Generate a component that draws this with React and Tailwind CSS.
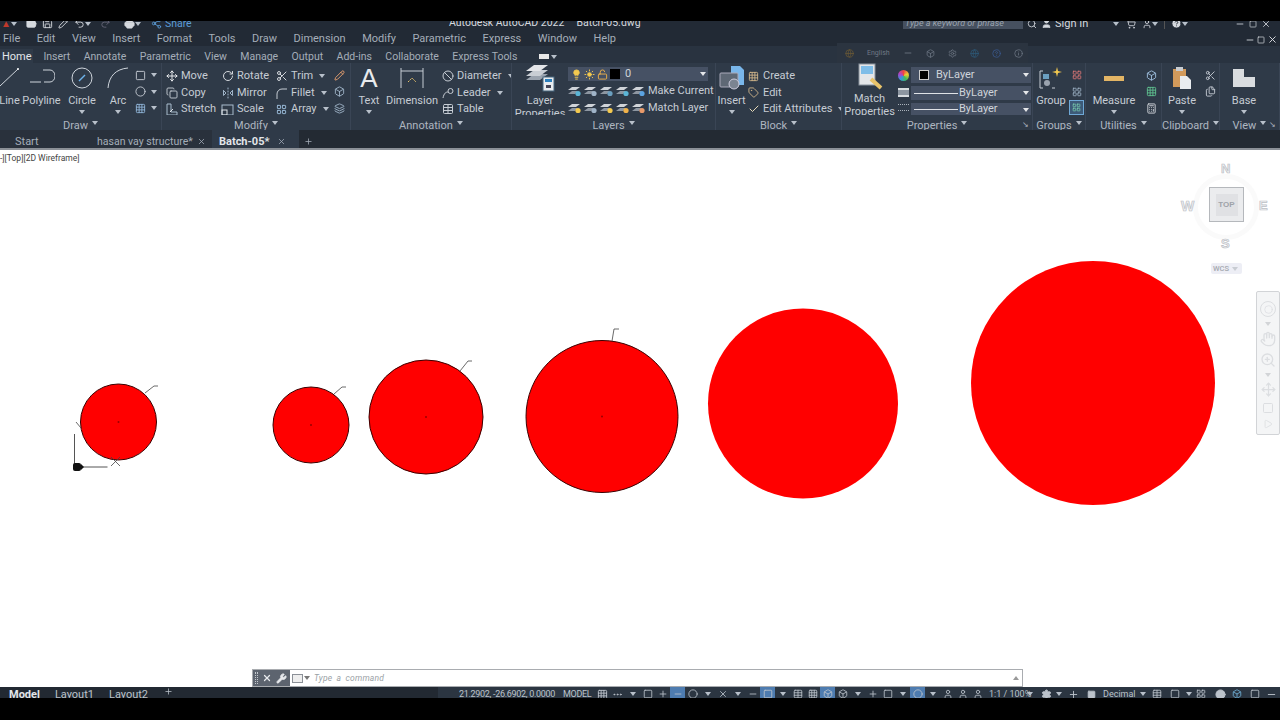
import React from 'react';
import {
  Move, Copy, RotateCw, FlipHorizontal2, Scissors, LayoutGrid, Ban, Table, Lightbulb, Sun, LockOpen,
  Search, User, ShoppingCart, CircleHelp, X, Minus, Wrench, Settings, Plus, Calculator, Files, Hand,
  ZoomIn, Play, Square, Circle, Pencil, Box, Info, Globe, Share2, Save, FolderOpen, Printer, Undo2, Redo2,
  Grid3x3, Ellipsis, Check, Layers, Tag,
} from 'lucide-react';

function Caret({ className = 'text-[#b8c0ca]' }) {
  return (
    <svg width="6" height="4" viewBox="0 0 6 4" className={`shrink-0 ${className}`}>
      <path d="M0 0h6L3 4z" fill="currentColor" />
    </svg>
  );
}

function Panel({ width, title, corner, children }) {
  return (
    <div className={`flex h-full shrink-0 flex-col border-r border-[#3a4555] ${width}`}>
      <div className="flex h-[52px] overflow-hidden">{children}</div>
      <div className="relative mt-[4px] flex h-[11px] justify-center gap-[4px] overflow-hidden text-[11px] leading-[14px] text-[#aeb6c0]">
        <span>{title}</span>
        <span className="mt-[2px]"><Caret /></span>
        {corner && <span className="absolute right-[3px] top-[2px] text-[8px] leading-[8px]">↘</span>}
      </div>
    </div>
  );
}

function BigTool({ icon, label, label2, width, caret }) {
  return (
    <div className={`flex shrink-0 flex-col items-center text-[11px] leading-[13px] text-[#c6ccd4] ${width}`}>
      <div className="flex h-[30px] items-center justify-center">{icon}</div>
      <span className="mt-[1px] whitespace-nowrap">{label}</span>
      {label2 && <span className="whitespace-nowrap">{label2}</span>}
      {caret && <span className="mt-[3px]"><Caret /></span>}
    </div>
  );
}

function Tool({ icon, label, caret }) {
  return (
    <div className="flex h-[16.5px] shrink-0 items-center gap-[3px] whitespace-nowrap text-[11px] text-[#c6ccd4]">
      <span className="flex h-[13px] w-[13px] shrink-0 items-center justify-center">{icon}</span>
      <span>{label}</span>
      {caret && <span className="ml-[3px]"><Caret /></span>}
    </div>
  );
}

function Col({ children, width, className = '' }) {
  return <div className={`flex shrink-0 flex-col pt-[4px] ${width} ${className}`}>{children}</div>;
}

function Slot({ children }) {
  return <span className="flex h-[16.5px] shrink-0 items-center">{children}</span>;
}

function LayerIcon() {
  return (
    <svg width="32" height="30" viewBox="0 0 32 30">
      <path d="M2 17l8-6h14l-8 6z" fill="#9aa3ae" />
      <path d="M2 13l8-6h14l-8 6z" fill="#c9ced4" />
      <path d="M2 8l8-6h14l-8 6z" fill="#e4e6e9" />
      <rect x="19" y="14" width="11" height="14" fill="#e9ecef" stroke="#47667f" />
      <rect x="21" y="16" width="7" height="3" fill="#2c7fbc" />
      <rect x="22" y="22" width="5" height="3" fill="#445" />
    </svg>
  );
}

function LayerMini({ color = '#d8dce0' }) {
  return (
    <svg width="13" height="12" viewBox="0 0 13 12" className="shrink-0">
      <path d="M0 5l4-3h8L8 5z" fill="#cfd3d8" />
      <path d="M0 9l4-3h6L7 9z" fill="#8d96a1" />
      <circle cx="10" cy="8.5" r="2.6" fill={color} />
    </svg>
  );
}

function Stretch() {
  return (
    <svg width="13" height="13" viewBox="0 0 13 13">
      <path d="M2 1h4v8h6v3H2z" fill="none" stroke="#a9bccd" />
      <path d="M5 9l3-3" stroke="#dfe3e7" />
    </svg>
  );
}

function Scale() {
  return (
    <svg width="13" height="13" viewBox="0 0 13 13">
      <rect x="1" y="2" width="11" height="10" fill="none" stroke="#a9bccd" />
      <rect x="1" y="7" width="5" height="5" fill="none" stroke="#dfe3e7" />
    </svg>
  );
}

function Combo({ height, children, className = '' }) {
  return (
    <div className={`flex items-center justify-between bg-[#465164] pl-[3px] pr-[2px] text-[11px] text-[#cfd4da] ${height} ${className}`}>
      <div className="flex items-center">{children}</div>
      <Caret className="text-[#e5e7ea]" />
    </div>
  );
}

function LineWeight() {
  return (
    <>
      <span className="h-px w-[44px] bg-[#dfe2e6]" />
      <span className="ml-[1px]">ByLayer</span>
    </>
  );
}

function StatusIcon({ children, active, className = 'w-[15px]' }) {
  return (
    <span className={`flex h-[14px] shrink-0 items-center justify-center ${className} ${active ? 'bg-[#4e7cb0]' : ''}`}>{children}</span>
  );
}

function Canvas() {
  const circles = [
    { cx: 118.5, cy: 272, r: 38, stroke: true },
    { cx: 311, cy: 275, r: 38, stroke: true },
    { cx: 426, cy: 267, r: 57, stroke: true },
    { cx: 602, cy: 266.5, r: 76, stroke: true },
    { cx: 803, cy: 253.5, r: 95 },
    { cx: 1093, cy: 233, r: 122 },
  ];
  return (
    <svg width="1280" height="537" viewBox="0 0 1280 537" className="block">
      {circles.map((c) => (
        <g key={c.cx}>
          <circle cx={c.cx} cy={c.cy} r={c.r} fill="#ff0000" stroke={c.stroke ? '#3a0000' : 'none'} strokeWidth="1" />
          {c.stroke && <circle cx={c.cx} cy={c.cy} r="1" fill="#9a0000" />}
        </g>
      ))}
      <g fill="none" stroke="#444" strokeWidth="0.8">
        <path d="M145 243l9-7h4" />
        <path d="M334 244l8-7h4" />
        <path d="M460 221l8-10h4" />
        <path d="M612 191l2-12h5" />
        <path d="M76 272l5 6" />
        <path d="M111 307l9 9M120 307l-9 9" />
      </g>
      <path d="M74.5 284v33h33" fill="none" stroke="#555" strokeWidth="1" />
      <rect x="73" y="313" width="8" height="8" fill="#111" rx="2" />
      <path d="M81 314l3 3-3 3z" fill="#111" />
    </svg>
  );
}

export default function App() {
  return (
    <div className="flex h-[720px] w-[1280px] flex-col overflow-hidden bg-black font-[family-name:Roboto,sans-serif]">
      <div className="h-[21px] shrink-0 bg-black" />

      {/* title bar, top is cut by the video frame */}
      <div className="flex h-[10px] shrink-0 items-start overflow-hidden bg-[#222a35] text-[10.5px] leading-[10px] text-[#d5d9de]">
        <div className="mt-[-3px] flex w-[449px] shrink-0 items-center pl-[1px]">
          <span className="text-[10px] text-[#c0392b]">▲</span>
          <Caret />
          <FolderOpen size={11} className="ml-[9px]" fill="currentColor" />
          <Save size={11} className="ml-[5px]" />
          <Pencil size={11} className="ml-[5px]" />
          <Undo2 size={11} className="ml-[5px]" />
          <Caret />
          <Redo2 size={11} className="ml-[9px] text-[#667]" />
          <Printer size={11} className="ml-[13px]" fill="currentColor" />
          <Caret />
          <Share2 size={11} className="ml-[10px] text-[#5b9bd5]" />
          <span className="ml-[3px] text-[#5b9bd5]">Share</span>
        </div>
        <div className="mt-[-3px] flex w-[454px] shrink-0 gap-[12px] whitespace-nowrap">
          <span>Autodesk AutoCAD 2022</span>
          <span>Batch-05.dwg</span>
        </div>
        <div className="h-[8px] w-[120px] shrink-0 bg-[#46505f] pl-[2px] text-[9px] italic leading-[5px] text-[#9aa3ae]">Type a keyword or phrase</div>
        <div className="ml-[4px] mt-[-3px] flex items-center whitespace-nowrap text-[11px]">
          <Search size={10} />
          <User size={11} fill="currentColor" className="ml-[4px]" />
          <span className="ml-[3px]">Sign In</span>
          <span className="ml-[25px]"><Caret /></span>
          <ShoppingCart size={10} className="ml-[7px]" />
          <User size={10} className="ml-[6px]" />
          <Caret />
          <span className="ml-[6px] h-[10px] w-px bg-[#555]" />
          <CircleHelp size={11} className="ml-[6px]" fill="#d5d9de" stroke="#222a35" />
          <Caret />
          <Minus size={10} className="ml-[47px]" />
          <Square size={8} className="ml-[4px]" />
          <X size={10} className="ml-[4px]" />
        </div>
      </div>

      {/* menu bar */}
      <div className="flex h-[15px] shrink-0 items-center gap-[16.5px] bg-[#222a35] pl-[3px] pt-[2px] text-[11px] text-[#a5aeb9]">
        {['File', 'Edit', 'View', 'Insert', 'Format', 'Tools', 'Draw', 'Dimension', 'Modify', 'Parametric', 'Express', 'Window', 'Help'].map((m) => (
          <span key={m}>{m}</span>
        ))}
        <div className="ml-auto mr-[2px] flex items-center gap-[2px] text-[#e0e3e7]">
          <Minus size={10} />
          <Square size={8} />
          <X size={11} />
        </div>
      </div>

      {/* ribbon tabs */}
      <div className="relative flex h-[17px] shrink-0 items-end gap-[13.4px] bg-[#293340] text-[10.5px] leading-[12px] text-[#a5aeb9]">
        <span className="mr-[-3px] flex h-[14px] w-[33px] items-center bg-[#2f3a48] pl-[2px] pt-[2px] text-[11px] text-[#e3e6ea]">Home</span>
        {['Insert', 'Annotate', 'Parametric', 'View', 'Manage', 'Output', 'Add-ins', 'Collaborate', 'Express Tools'].map((t) => (
          <span key={t}>{t}</span>
        ))}
        <span className="mb-[4px] ml-[8px] flex items-center gap-[2px]"><span className="h-[5px] w-[10px] bg-[#e8e8e8]" /><Caret /></span>
        {/* floating language bar */}
        <div className="absolute left-[837px] top-[-3px] flex h-[20px] w-[191px] items-center gap-[13px] bg-[#2b3440] pl-[8px] text-[7px] text-[#6f7885]">
          <Globe size={9} className="text-[#6b5a36]" />
          <span>English</span>
          <Minus size={10} />
          <Box size={9} />
          <Settings size={9} />
          <Globe size={9} className="text-[#2d5a78]" />
          <CircleHelp size={9} className="text-[#3b5b92]" />
          <Info size={9} />
        </div>
      </div>

      {/* ribbon */}
      <div className="flex h-[67px] shrink-0 bg-[#2f3a48]">
        <Panel width="w-[162px]" title="Draw">
          <BigTool
            width="w-[19px] mr-[4px]"
            label="Line"
            icon={<svg width="19" height="24" viewBox="0 0 19 24"><path d="M0 20L18 3" stroke="#cfd5dc" /><circle cx="18" cy="3" r="1" fill="#fff" /></svg>}
          />
          <BigTool
            width="w-[37px]"
            label="Polyline"
            icon={<svg width="26" height="22" viewBox="0 0 26 22"><path d="M1 15h11M14 3h7a5 6 0 0 1 0 12h-6" fill="none" stroke="#cfd5dc" /></svg>}
          />
          <BigTool
            width="w-[44px]"
            label="Circle"
            caret
            icon={<svg width="24" height="24" viewBox="0 0 24 24"><circle cx="12" cy="12" r="10" fill="none" stroke="#cfd5dc" /><path d="M9 15l6-6" stroke="#6db2ea" strokeWidth="1.5" /></svg>}
          />
          <BigTool
            width="w-[28px]"
            label="Arc"
            caret
            icon={<svg width="22" height="24" viewBox="0 0 22 24"><path d="M1 22C2 10 9 3 21 2" fill="none" stroke="#cfd5dc" /></svg>}
          />
          <Col width="w-[27px]" className="pl-[3px]">
            <Slot><Square size={11} className="mr-[5px] text-[#c6ccd4]" /><Caret /></Slot>
            <Slot><Circle size={11} className="mr-[5px] text-[#c6ccd4]" /><Caret /></Slot>
            <Slot><Grid3x3 size={11} className="mr-[5px] text-[#8fb4d8]" /><Caret /></Slot>
          </Col>
        </Panel>

        <Panel width="w-[189px]" title="Modify">
          <Col width="w-[59px]" className="pl-[3px] pt-[5px]">
            <Tool label="Move" icon={<Move size={12} className="text-[#e6e8eb]" />} />
            <Tool label="Copy" icon={<Copy size={12} className="text-[#b9c0c8]" />} />
            <Tool label="Stretch" icon={<Stretch />} />
          </Col>
          <Col width="w-[54px]" className="pt-[5px]">
            <Tool label="Rotate" icon={<RotateCw size={12} className="text-[#d5d9de]" />} />
            <Tool label="Mirror" icon={<FlipHorizontal2 size={12} className="text-[#9fb3c7]" />} />
            <Tool label="Scale" icon={<Scale />} />
          </Col>
          <Col width="w-[56px]" className="pt-[5px]">
            <Tool label="Trim" caret icon={<Scissors size={12} className="text-[#d5d9de]" />} />
            <Tool label="Fillet" caret icon={<svg width="12" height="12" viewBox="0 0 12 12"><path d="M1 12V7a5 5 0 0 1 5-5h5" fill="none" stroke="#c6ccd4" /></svg>} />
            <Tool label="Array" caret icon={<LayoutGrid size={11} className="text-[#9fc0de]" />} />
          </Col>
          <Col width="w-[16px]" className="items-center">
            <Slot><Pencil size={11} className="text-[#e8a070]" /></Slot>
            <Slot><Box size={11} className="text-[#9fb3c7]" /></Slot>
            <Slot><Layers size={11} className="text-[#9fb3c7]" /></Slot>
          </Col>
        </Panel>

        <Panel width="w-[161px]" title="Annotation">
          <BigTool
            width="w-[36px]"
            label="Text"
            caret
            icon={<span className="font-[family-name:'Liberation_Sans',sans-serif] text-[26px] font-normal leading-[28px] text-[#e8eaed]">A</span>}
          />
          <BigTool
            width="w-[50px]"
            label="Dimension"
            icon={<svg width="24" height="24" viewBox="0 0 24 24"><path d="M1 2v20M23 2v20M1 5h22" stroke="#c6ccd4" fill="none" /><path d="M8 16l4-4 4 4" stroke="#e8c36a" fill="none" strokeDasharray="2 1" /></svg>}
          />
          <Col width="w-[73px]" className="pl-[4px] pt-[5px]">
            <Tool label="Diameter" caret icon={<Ban size={12} className="text-[#c6ccd4]" />} />
            <Tool label="Leader" caret icon={<svg width="12" height="12" viewBox="0 0 12 12"><path d="M1 11c1-5 3-6 5-6" fill="none" stroke="#c6ccd4" /><circle cx="8.5" cy="4" r="2.5" fill="none" stroke="#c6ccd4" /></svg>} />
            <Tool label="Table" icon={<Table size={12} className="text-[#c6ccd4]" />} />
          </Col>
        </Panel>

        <Panel width="w-[204px]" title="Layers">
          <BigTool width="w-[56px]" label="Layer" label2="Properties" icon={<LayerIcon />} />
          <div className="flex w-[146px] shrink-0 flex-col pt-[4px]">
            <Combo height="h-[14px]" className="mr-[6px]">
              <span className="flex items-center gap-[2px]">
                <Lightbulb size={11} className="text-[#f3c94f]" fill="#f3c94f" />
                <Sun size={11} className="text-[#f3c94f]" fill="#f3c94f" />
                <LockOpen size={11} className="text-[#f0b24a]" />
                <span className="h-[10px] w-[10px] bg-black" />
                <span className="ml-[3px]">0</span>
              </span>
            </Combo>
            <div className="mt-[2px] flex h-[17px] items-center gap-[3px] whitespace-nowrap text-[11px] text-[#c6ccd4]">
              <LayerMini color="#5bb5d6" /><LayerMini color="#9fb3c7" /><LayerMini color="#6b9fc0" /><LayerMini color="#5bb5d6" />
              <LayerMini color="#5ba3e0" />
              <span>Make Current</span>
            </div>
            <div className="flex h-[17px] items-center gap-[3px] whitespace-nowrap text-[11px] text-[#c6ccd4]">
              <LayerMini color="#f3c94f" /><LayerMini color="#9fb3c7" /><LayerMini color="#f3c94f" /><LayerMini color="#f0b24a" />
              <LayerMini color="#e89a6a" />
              <span>Match Layer</span>
            </div>
          </div>
        </Panel>

        <Panel width="w-[126px]" title="Block">
          <BigTool
            width="w-[31px]"
            label="Insert"
            caret
            icon={<svg width="26" height="26" viewBox="0 0 26 26"><path d="M12 1h9l4 4v15H12z" fill="#79b6ea" /><rect x="1" y="8" width="18" height="14" rx="1" fill="#5e6875" stroke="#aab" /><circle cx="15" cy="19" r="5" fill="#7b8491" stroke="#ccd" /></svg>}
          />
          <Col width="w-[93px]" className="pt-[5px]">
            <Tool label="Create" icon={<Grid3x3 size={11} className="text-[#d0b58a]" />} />
            <Tool label="Edit" icon={<Tag size={11} className="text-[#d0b58a]" />} />
            <Tool label="Edit Attributes" caret icon={<Check size={12} className="text-[#e6d9b8]" />} />
          </Col>
        </Panel>

        <Panel width="w-[191px]" title="Properties" corner>
          <BigTool
            width="w-[55px]"
            label="Match"
            label2="Properties"
            icon={<svg width="30" height="28" viewBox="0 0 30 28"><rect x="4" y="1" width="16" height="21" fill="#e4e6e9" stroke="#89929c" /><rect x="6" y="3" width="12" height="8" fill="#7fbde8" /><path d="M16 16l10 9" stroke="#e8c36a" strokeWidth="4" /></svg>}
          />
          <div className="flex w-[13px] shrink-0 flex-col items-center gap-[7px] pt-[7px]">
            <span className="h-[11px] w-[11px] rounded-full bg-[conic-gradient(#e44,#ec3,#4b5,#39d,#a4c,#e44)]" />
            <span className="h-[9px] w-[11px] border-y-2 border-[#d8dce0] bg-[#8d96a1]" />
            <span className="h-[7px] w-[11px] border-y border-dotted border-[#aab2bb]" />
          </div>
          <div className="ml-[1px] flex w-[120px] shrink-0 flex-col gap-[3px] pt-[4px]">
            <Combo height="h-[16px]" className="pl-[8px]">
              <span className="mr-[7px] h-[10px] w-[10px] border border-[#ccc] bg-black" />
              ByLayer
            </Combo>
            <Combo height="h-[14px]" className="pl-[1px]"><LineWeight /></Combo>
            <Combo height="h-[13px]" className="pl-[1px]"><LineWeight /></Combo>
          </div>
        </Panel>

        <Panel width="w-[53px]" title="Groups">
          <BigTool
            width="w-[36px]"
            label="Group"
            icon={<svg width="24" height="24" viewBox="0 0 24 24"><path d="M4 5H1v17h3M16 22h-3" fill="none" stroke="#c6ccd4" /><rect x="4" y="8" width="6" height="5" fill="#6b9fc0" /><circle cx="8" cy="17" r="3" fill="#9aa3ae" /><path d="M18 1l1 4 4 1-4 1-1 4-1-4-4-1 4-1z" fill="#f3c94f" /></svg>}
          />
          <Col width="w-[15px]" className="items-center">
            <Slot><LayoutGrid size={10} className="text-[#d77]" /></Slot>
            <Slot><LayoutGrid size={10} className="text-[#9fb3c7]" /></Slot>
            <span className="flex h-[15px] w-[15px] items-center justify-center border border-[#6fa8d6] bg-[#3d5a78]"><LayoutGrid size={9} className="text-[#7cd0b0]" /></span>
          </Col>
        </Panel>

        <Panel width="w-[76px]" title="Utilities">
          <BigTool
            width="w-[56px]"
            label="Measure"
            caret
            icon={<span className="block h-[5px] w-[20px] bg-[#e3b565]" />}
          />
          <Col width="w-[18px]" className="items-center">
            <Slot><Box size={11} className="text-[#9fc0de]" /></Slot>
            <Slot><Grid3x3 size={11} className="text-[#5fbf8f]" /></Slot>
            <Slot><Calculator size={11} className="text-[#d5d9de]" /></Slot>
          </Col>
        </Panel>

        <Panel width="w-[58px]" title="Clipboard">
          <BigTool
            width="w-[40px]"
            label="Paste"
            caret
            icon={<svg width="20" height="24" viewBox="0 0 20 24"><rect x="1" y="3" width="13" height="18" fill="#d29a5b" /><rect x="4" y="1" width="7" height="4" fill="#c8ccd1" /><path d="M8 10h7l4 4v9H8z" fill="#e9ecef" /></svg>}
          />
          <Col width="w-[16px]" className="items-center">
            <Slot><Scissors size={11} className="text-[#c6ccd4]" /></Slot>
            <Slot><Files size={11} className="text-[#c6ccd4]" /></Slot>
          </Col>
        </Panel>

        <Panel width="w-[60px]" title="View" corner>
          <BigTool
            width="w-[48px]"
            label="Base"
            caret
            icon={<svg width="22" height="18" viewBox="0 0 22 18"><path d="M0 0h11v8h11v10H0z" fill="#d9dcdf" /></svg>}
          />
        </Panel>
      </div>

      {/* file tabs */}
      <div className="flex h-[18px] shrink-0 items-end bg-[#232a33] text-[11px] leading-[15px] text-[#a5aeb9]">
        <span className="flex h-full w-[90px] items-center bg-[#29313c] pl-[15px] pt-[4px]">Start</span>
        <span className="flex h-full w-[122px] items-center gap-[4px] whitespace-nowrap bg-[#29313c] pl-[7px] pt-[4px] text-[10.5px]">
          hasan vay structure* <X size={9} />
        </span>
        <span className="flex h-full w-[87px] items-center gap-[8px] bg-[#2f3a48] pl-[7px] pt-[4px] font-bold text-[#e3e6ea]">
          Batch-05* <X size={9} className="text-[#a5aeb9]" />
        </span>
        <Plus size={9} className="mb-[2px] ml-[5px]" />
      </div>
      <div className="h-[2px] shrink-0 bg-[#8b9097]" />

      {/* drawing area */}
      <div className="relative h-[537px] shrink-0 overflow-hidden bg-white">
        <Canvas />
        <span className="absolute left-0 top-[3px] text-[8.5px] leading-[11px] text-[#444]">-][Top][2D Wireframe]</span>

        {/* view cube */}
        <div className="absolute left-[1181px] top-[9px] h-[95px] w-[90px] font-[family-name:'Liberation_Sans',sans-serif] font-bold text-[#eeeff1] [-webkit-text-stroke:0.7px_#bcc0c6]">
          <div className="absolute left-[12px] top-[15px] h-[66px] w-[66px] rounded-full border-[5px] border-[#fafafa]" />
          <span className="absolute left-[40px] top-0 text-[13px]">N</span>
          <span className="absolute left-[0px] top-[37px] text-[14px]">W</span>
          <span className="absolute left-[78px] top-[37px] text-[13px]">E</span>
          <span className="absolute left-[40px] top-[75px] text-[13px]">S</span>
          <div className="absolute left-[28px] top-[28px] flex h-[35px] w-[35px] items-center justify-center border border-[#b5b8bc] bg-[#ebecee] [-webkit-text-stroke:0]">
            <span className="flex h-[22px] w-[22px] items-center justify-center bg-[#e0e1e4] text-[8px] text-[#9fa3a9]">TOP</span>
          </div>
        </div>
        <div className="absolute left-[1211px] top-[113px] flex h-[11px] w-[31px] items-center gap-[3px] rounded-[2px] bg-[#edeef5] pl-[2px] text-[7.5px] font-medium text-[#a5a9b0]">
          WCS <Caret className="text-[#c8ccd2]" />
        </div>

        {/* nav bar */}
        <div className="absolute left-[1256px] top-[141px] flex h-[144px] w-[24px] flex-col items-center gap-[5px] rounded-[2px] border border-[#d2d4d7] bg-[#f4f5f6] pt-[9px] text-[#dcdee1]">
          <span className="flex h-[16px] w-[16px] items-center justify-center rounded-full border border-[#dcdee1]"><Circle size={9} /></span>
          <Caret className="text-[#d2d4d7]" />
          <Hand size={16} />
          <ZoomIn size={16} />
          <Caret className="text-[#d2d4d7]" />
          <Move size={15} />
          <Square size={12} />
          <Play size={10} />
        </div>

        {/* command line */}
        <div className="absolute bottom-0 left-[252px] flex h-[18px] w-[771px] items-center border border-[#a9acb0] bg-white">
          <div className="flex h-full w-[37px] shrink-0 items-center gap-[4px] bg-[#5d646f] pl-[2px] text-[#e8eaed]">
            <span className="h-[12px] w-[3px] border-x border-dotted border-[#c5c9ce]" />
            <X size={10} strokeWidth={3} />
            <Wrench size={11} fill="currentColor" />
          </div>
          <div className="ml-[2px] flex items-center gap-[1px] text-[#8b9097]">
            <span className="h-[9px] w-[11px] border border-[#8b9097] bg-[#eee]" />
            <Caret className="text-[#777]" />
          </div>
          <span className="ml-[4px] text-[8.5px] italic tracking-[0.2px] [word-spacing:2px] text-[#9a9fa5]">Type a command</span>
          <span className="ml-auto mr-[3px]"><Caret className="rotate-180 text-[#999]" /></span>
        </div>
      </div>

      {/* status bar, bottom is cut by the video frame */}
      <div className="flex h-[11px] shrink-0 items-start overflow-hidden bg-[#222932] text-[11px] leading-[15px] text-[#bcc3cb]">
        <div className="flex w-[438px] shrink-0 items-start">
          <span className="ml-[9px] font-bold text-[#e3e6ea]">Model</span>
          <span className="ml-[15px]">Layout1</span>
          <span className="ml-[15px]">Layout2</span>
          <Plus size={9} className="ml-[16px]" />
        </div>
        <div className="flex h-full flex-1 items-start whitespace-nowrap bg-[#2b3541] text-[9px]">
          <div className="ml-[21px] w-[104px] shrink-0 tracking-[-0.3px]">21.2902, -26.6902, 0.0000</div>
          <div className="w-[32px] shrink-0 tracking-[-0.3px]">MODEL</div>
          <StatusIcon><Grid3x3 size={11} /></StatusIcon>
          <StatusIcon><Ellipsis size={11} /></StatusIcon>
          <StatusIcon><Caret /></StatusIcon>
          <StatusIcon><Square size={10} /></StatusIcon>
          <StatusIcon><Plus size={10} /></StatusIcon>
          <StatusIcon active><Minus size={10} /></StatusIcon>
          <StatusIcon><Circle size={10} /></StatusIcon>
          <StatusIcon><Caret /></StatusIcon>
          <StatusIcon><X size={10} /></StatusIcon>
          <StatusIcon><Caret /></StatusIcon>
          <StatusIcon><Minus size={10} /></StatusIcon>
          <StatusIcon active><Square size={10} /></StatusIcon>
          <StatusIcon><Caret /></StatusIcon>
          <StatusIcon><Table size={10} /></StatusIcon>
          <StatusIcon><Grid3x3 size={10} /></StatusIcon>
          <StatusIcon active><Box size={10} /></StatusIcon>
          <StatusIcon><Box size={10} /></StatusIcon>
          <StatusIcon><Caret /></StatusIcon>
          <StatusIcon><Plus size={10} /></StatusIcon>
          <StatusIcon><Square size={10} /></StatusIcon>
          <StatusIcon><Caret /></StatusIcon>
          <StatusIcon active><Circle size={10} /></StatusIcon>
          <StatusIcon><Caret /></StatusIcon>
          <StatusIcon><User size={10} /></StatusIcon>
          <StatusIcon><User size={10} /></StatusIcon>
          <StatusIcon><User size={10} /></StatusIcon>
          <span className="ml-[4px] w-[38px] shrink-0">1:1 / 100%</span>
          <span className="mt-[5px]"><Caret /></span>
          <StatusIcon className="ml-[6px] w-[15px]"><Settings size={11} fill="currentColor" /></StatusIcon>
          <StatusIcon className="w-[9px]"><Caret /></StatusIcon>
          <StatusIcon className="w-[20px]"><Plus size={11} /></StatusIcon>
          <StatusIcon className="ml-[1px] w-[15px]"><Square size={9} fill="currentColor" /></StatusIcon>
          <span className="ml-[4px] w-[36px] shrink-0">Decimal</span>
          <StatusIcon className="w-[8px]"><Caret /></StatusIcon>
          <StatusIcon className="ml-[2px] w-[15px]"><Table size={10} /></StatusIcon>
          <StatusIcon className="ml-[3px] w-[15px]"><Square size={10} /></StatusIcon>
          <StatusIcon className="w-[13px]"><Caret /></StatusIcon>
          <StatusIcon className="w-[11px]"><LayoutGrid size={10} /></StatusIcon>
          <StatusIcon className="ml-[7px] w-[15px]"><Circle size={11} fill="currentColor" /></StatusIcon>
          <StatusIcon className="ml-[1px] w-[15px]"><Box size={10} className="text-[#6fb0d6]" /></StatusIcon>
          <StatusIcon className="ml-[3px] w-[15px]"><Square size={10} /></StatusIcon>
          <StatusIcon className="ml-[2px] w-[15px]"><Minus size={11} /></StatusIcon>
        </div>
      </div>

      <div className="flex-1 bg-black" />
    </div>
  );
}
